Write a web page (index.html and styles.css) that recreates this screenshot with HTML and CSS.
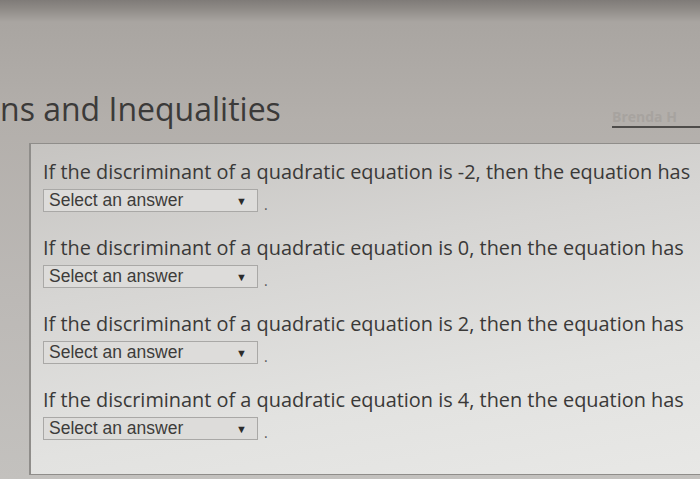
FILE: index.html
```html
<!DOCTYPE html>
<html>
<head>
<meta charset="utf-8">
<link rel="stylesheet" href="styles.css">
</head>
<body>
<div class="topstrip"></div>
<div class="header">
  <h1 class="title">ns and Inequalities</h1>
  <div class="user">Brenda H</div>
</div>
<div class="card">
  <div class="q">
    <p class="qtext">If the discriminant of a quadratic equation is -2, then the equation has</p>
    <div class="answer"><span class="select">Select an answer<span class="arrow">&#9660;</span></span><span class="dot">.</span></div>
  </div>
  <div class="q">
    <p class="qtext">If the discriminant of a quadratic equation is 0, then the equation has</p>
    <div class="answer"><span class="select">Select an answer<span class="arrow">&#9660;</span></span><span class="dot">.</span></div>
  </div>
  <div class="q">
    <p class="qtext">If the discriminant of a quadratic equation is 2, then the equation has</p>
    <div class="answer"><span class="select">Select an answer<span class="arrow">&#9660;</span></span><span class="dot">.</span></div>
  </div>
  <div class="q">
    <p class="qtext">If the discriminant of a quadratic equation is 4, then the equation has</p>
    <div class="answer"><span class="select">Select an answer<span class="arrow">&#9660;</span></span><span class="dot">.</span></div>
  </div>
</div>
</body>
</html>
```
FILE: styles.css
```css
html, body {
  margin: 0;
  padding: 0;
  height: 100%;
  overflow: hidden;
}
body {
  font-family: "Open Sans", "Liberation Sans", sans-serif;
  background: linear-gradient(180deg, #7f7b78 0, #8d8985 8px, #a9a5a1 22px, #b3afab 120px, #bcb9b6 300px, #c3c1be 479px);
}
.topstrip {
  height: 8px;
}
.header {
  display: flex;
  justify-content: space-between;
  align-items: flex-end;
  height: 120px;
}
.title {
  margin: 0 0 0 0;
  font-weight: 400;
  font-size: 32px;
  line-height: 38px;
  color: #3b3a39;
}
.user {
  width: 88px;
  margin-bottom: 0;
  font-size: 14px;
  font-weight: 700;
  color: #a7a39f;
  border-bottom: 2px solid #4e4c4a;
  line-height: 18px;
  white-space: nowrap;
  overflow: hidden;
}
.card {
  margin: 15px -20px 0 29px;
  height: 332px;
  border: 1px solid #8f8d8a;
  border-left-width: 2px;
  background: linear-gradient(170deg, #c6c4c1 0%, #d6d5d3 35%, #e2e2e0 70%, #e8e8e6 100%);
  padding: 16px 0 0 12px;
  box-sizing: border-box;
}
.q {
  margin-bottom: 24px;
}
.qtext {
  margin: 0;
  font-size: 19.9px;
  line-height: 24px;
  color: #3a3938;
  white-space: nowrap;
}
.answer {
  display: flex;
  align-items: flex-end;
  margin-top: 5px;
}
.select {
  display: flex;
  justify-content: space-between;
  align-items: center;
  width: 215px;
  height: 23px;
  box-sizing: border-box;
  padding: 0 10px 0 5px;
  border: 1px solid #a9a8a6;
  background: #dddcda;
  font-family: "Liberation Sans", Arial, sans-serif;
  font-size: 17.5px;
  color: #3d3c3b;
}
.arrow {
  font-size: 11px;
  color: #2c2b2a;
}
.dot {
  margin-left: 6px;
  font-size: 14px;
  color: #555;
  line-height: 14px;
}
```
